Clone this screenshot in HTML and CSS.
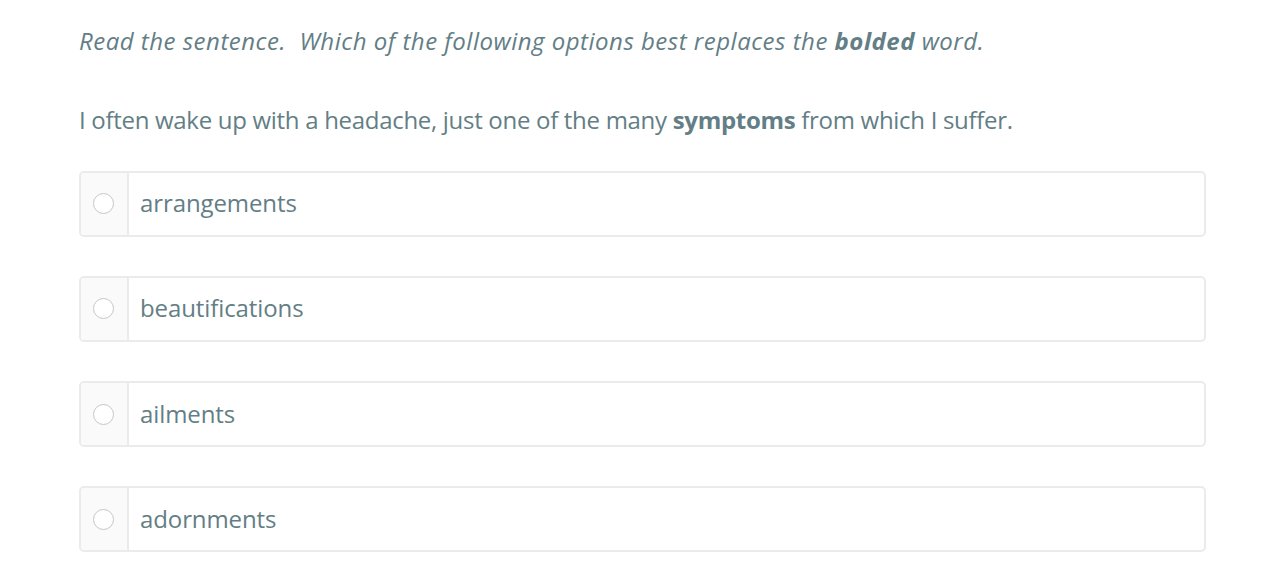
FILE: index.html
```html
<!DOCTYPE html>
<html>
<head>
<meta charset="utf-8">
<link rel="stylesheet" href="styles.css">
</head>
<body>
<div class="question">
  <p class="prompt">Read the sentence.&nbsp; Which of the following options best replaces the <b>bolded</b> word.</p>
  <p class="sentence">I often wake up with a headache, just one of the many <b>symptoms</b> from which I suffer.</p>
  <div class="options">
    <label class="option"><span class="gutter"><span class="radio"></span></span><span class="text">arrangements</span></label>
    <label class="option"><span class="gutter"><span class="radio"></span></span><span class="text">beautifications</span></label>
    <label class="option"><span class="gutter"><span class="radio"></span></span><span class="text">ailments</span></label>
    <label class="option"><span class="gutter"><span class="radio"></span></span><span class="text">adornments</span></label>
  </div>
</div>
</body>
</html>
```
FILE: styles.css
```css
html, body {
  margin: 0;
  padding: 0;
  background: #ffffff;
}
body {
  font-family: "Open Sans", "Noto Sans", sans-serif;
  color: #637e85;
}
.question {
  padding: 24px 82px 0 79px;
}
.prompt {
  margin: 0;
  font-style: italic;
  font-size: 24px;
  line-height: 34px;
  letter-spacing: 0.5px;
}
.prompt b {
  font-weight: 700;
}
.sentence {
  margin: 45px 0 0 0;
  font-size: 24px;
  line-height: 34px;
  letter-spacing: -0.3px;
}
.options {
  display: flex;
  flex-direction: column;
  gap: 38.67px;
  margin-top: 33.5px;
}
.option {
  display: flex;
  height: 62.5px;
  border: 2px solid #ebebeb;
  border-radius: 5px;
  overflow: hidden;
}
.gutter {
  width: 46px;
  background: #fafafa;
  border-right: 2px solid #ebebeb;
  display: flex;
  align-items: center;
  justify-content: center;
}
.radio {
  width: 19px;
  height: 19px;
  border: 1px solid #c6c6c6;
  border-radius: 50%;
  background: #fff;
  margin-left: -1px;
}
.text {
  display: flex;
  align-items: center;
  padding: 0 0 2px 11px;
  font-size: 24px;
  letter-spacing: -0.1px;
}
```
